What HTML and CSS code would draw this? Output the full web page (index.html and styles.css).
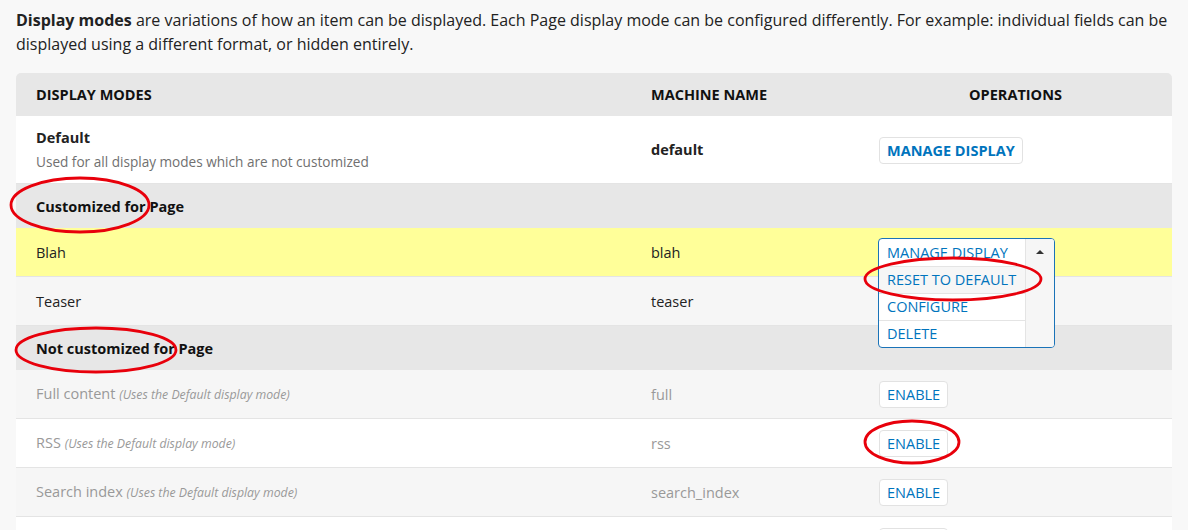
FILE: index.html
```html
<!DOCTYPE html>
<html lang="en">
<head>
<meta charset="utf-8">
<title>Display modes</title>
<link rel="stylesheet" href="styles.css">
</head>
<body>
<p class="intro"><strong>Display modes</strong> are variations of how an item can be displayed. Each Page display mode can be configured differently. For example: individual fields can be displayed using a different format, or hidden entirely.</p>

<table class="modes">
  <colgroup>
    <col class="col-name">
    <col class="col-machine">
    <col class="col-ops">
  </colgroup>
  <thead>
    <tr>
      <th>Display modes</th>
      <th>Machine name</th>
      <th class="th-ops">Operations</th>
    </tr>
  </thead>
  <tbody>
    <tr class="row-default">
      <td>
        <div class="mode-title">Default</div>
        <div class="mode-desc">Used for all display modes which are not customized</div>
      </td>
      <td class="strong">default</td>
      <td><a class="button button-bold" href="#">Manage display</a></td>
    </tr>
    <tr class="region">
      <td colspan="3">Customized for Page</td>
    </tr>
    <tr class="row-highlight">
      <td>Blah</td>
      <td>blah</td>
      <td class="ops-cell">
        <div class="dropbutton">
          <ul class="drop-list">
            <li><a href="#">Manage display</a></li>
            <li class="hover"><a href="#">Reset to default</a></li>
            <li><a href="#">Configure</a></li>
            <li><a href="#">Delete</a></li>
          </ul>
          <span class="drop-toggle"><span class="tri"></span></span>
        </div>
      </td>
    </tr>
    <tr class="row-even">
      <td>Teaser</td>
      <td>teaser</td>
      <td></td>
    </tr>
    <tr class="region">
      <td colspan="3">Not customized for Page</td>
    </tr>
    <tr class="row-even disabled">
      <td>Full content <em>(Uses the Default display mode)</em></td>
      <td>full</td>
      <td><a class="button" href="#">Enable</a></td>
    </tr>
    <tr class="row-odd disabled">
      <td>RSS <em>(Uses the Default display mode)</em></td>
      <td>rss</td>
      <td><a class="button" href="#">Enable</a></td>
    </tr>
    <tr class="row-even disabled">
      <td>Search index <em>(Uses the Default display mode)</em></td>
      <td>search_index</td>
      <td><a class="button" href="#">Enable</a></td>
    </tr>
    <tr class="row-odd disabled">
      <td>Search result highlighting input <em>(Uses the Default display mode)</em></td>
      <td>search_result</td>
      <td><a class="button" href="#">Enable</a></td>
    </tr>
  </tbody>
</table>

<svg class="annotations" width="1188" height="530" viewBox="0 0 1188 530" aria-hidden="true">
  <ellipse cx="80" cy="205" rx="69" ry="27" />
  <ellipse cx="96" cy="350" rx="80" ry="22" />
  <ellipse cx="953" cy="279" rx="88" ry="21" />
  <ellipse cx="912" cy="442" rx="47" ry="21" />
</svg>
</body>
</html>
```

FILE: styles.css
```css
html, body {
  margin: 0;
  padding: 0;
}

body {
  background: #f8f8f8;
  color: #222;
  font-family: "Open Sans", "Noto Sans", sans-serif;
  font-size: 14.5px;
  padding: 0 16px;
  position: relative;
  min-height: 530px;
}

.intro {
  margin: 8px 0 17px;
  font-size: 16px;
  line-height: 24px;
  color: #222;
}

.intro strong {
  font-weight: 700;
}

.modes {
  width: 1156px;
  table-layout: fixed;
  border-collapse: separate;
  border-spacing: 0;
}

.col-name { width: 615px; }
.col-machine { width: 228px; }
.col-ops { width: 313px; }

.modes th {
  background: #e7e7e7;
  height: 43px;
  padding: 0 20px;
  text-align: left;
  text-transform: uppercase;
  font-size: 14.5px;
  font-weight: 700;
  color: #111;
  box-sizing: border-box;
}

.modes th:first-child { border-top-left-radius: 5px; }
.modes th:last-child { border-top-right-radius: 5px; }

.modes .th-ops { text-align: center; }

.modes td {
  height: 49px;
  padding: 1px 20px 0;
  box-sizing: border-box;
  border-bottom: 1px solid #e4e4e4;
  vertical-align: middle;
  font-size: 14.5px;
  line-height: 20px;
  color: #222;
}

.row-default td {
  background: #fff;
  height: 68px;
}

.mode-title {
  font-weight: 700;
  line-height: 24px;
}

.mode-desc {
  font-size: 13.6px;
  line-height: 24px;
  color: #707070;
}

.modes td.strong { font-weight: 700; }

.region td {
  background: #e7e7e7;
  height: 44px;
  border-bottom: 0;
  padding-top: 2px;
  font-weight: 700;
  color: #111;
}

.row-highlight td { background: #ffff99; }
.row-even td { background: #f6f6f6; }
.row-odd td { background: #fff; }

.disabled td { color: #999; }

.disabled em {
  font-size: 12.3px;
  color: #999;
}

.button {
  display: inline-block;
  box-sizing: border-box;
  height: 27px;
  line-height: 25px;
  padding: 0 7px;
  border: 1px solid #e2e2e2;
  border-radius: 4px;
  background: #fff;
  color: #0074bd;
  text-decoration: none;
  text-transform: uppercase;
  font-size: 14.5px;
  vertical-align: middle;
}

.button-bold { font-weight: 700; }

.ops-cell { position: relative; }

.dropbutton {
  position: absolute;
  top: 10px;
  left: 19px;
  display: flex;
  width: 177px;
  box-sizing: border-box;
  border: 1px solid #1a73b8;
  border-radius: 4px;
  background: #fff;
  overflow: hidden;
  z-index: 2;
}

.drop-list {
  list-style: none;
  margin: 0;
  padding: 0;
  flex: 1;
}

.drop-list li {
  height: 27px;
  border-top: 1px solid #e4e4e4;
  box-sizing: border-box;
  padding-left: 8px;
  line-height: 26px;
}

.drop-list li:first-child {
  border-top: 0;
  height: 27px;
  line-height: 27px;
}

.drop-list li.hover { background: #f6f6f6; }

.drop-list a {
  color: #0074bd;
  text-decoration: none;
  text-transform: uppercase;
  font-size: 14.5px;
}

.drop-toggle {
  width: 29px;
  border-left: 1px solid #e4e4e4;
  background: #f6f6f6;
  display: flex;
  justify-content: center;
  padding-top: 11px;
  box-sizing: border-box;
}

.tri {
  width: 0;
  height: 0;
  border-left: 4px solid transparent;
  border-right: 4px solid transparent;
  border-bottom: 4px solid #333;
}

.annotations {
  position: absolute;
  top: 0;
  left: 0;
  pointer-events: none;
  z-index: 5;
}

.annotations ellipse {
  fill: none;
  stroke: #e8000b;
  stroke-width: 2.8;
}
```
